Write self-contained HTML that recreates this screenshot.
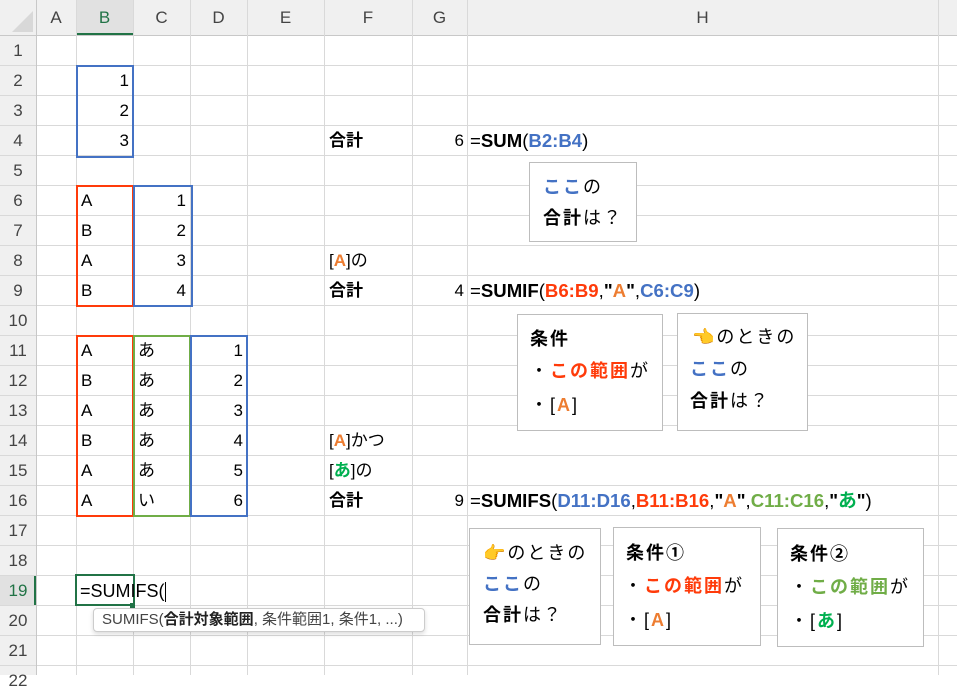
<!DOCTYPE html>
<html><head><meta charset="utf-8"><style>
*{margin:0;padding:0;box-sizing:border-box}
body{width:957px;height:675px;overflow:hidden;background:#fff;font-family:"Liberation Sans","Noto Sans CJK JP",sans-serif;font-size:17px;color:#000;position:relative}
.a{position:absolute}
.hl{position:absolute;left:0;width:957px;height:1px;background:#d9d9d9}
.vl{position:absolute;top:0;height:675px;width:1px;background:#d9d9d9}
.ch{position:absolute;top:0;height:35px;line-height:36px;text-align:center;color:#444;font-size:17px}
.rh{position:absolute;left:0;width:36px;height:30px;line-height:31px;text-align:center;color:#444;font-size:17px}
.c{position:absolute;height:30px;line-height:31px;white-space:nowrap}
.f{font-size:18.6px}
.r{text-align:right}
.b{font-weight:bold}
.bx{position:absolute;border:1.5px solid #bdbdbd;background:#fff;font-size:18px;letter-spacing:2px}
.bx div{position:absolute;white-space:nowrap}
.blue{color:#4472C4}.red{color:#FF3B0A}.org{color:#ED7D31}.grn{color:#70AD47}.g2{color:#00B050}
</style></head><body>
<div class="a" style="left:0;top:0;width:957px;height:35px;background:#f0f0f0"></div>
<div class="a" style="left:0;top:0;width:36px;height:675px;background:#f0f0f0"></div>
<div class="a" style="left:76px;top:0;width:57px;height:35px;background:#e1e1e1"></div>
<div class="a" style="left:76px;top:33px;width:57px;height:2px;background:#217346"></div>
<div class="a" style="left:0;top:575px;width:36px;height:30px;background:#e1e1e1"></div>
<div class="a" style="left:34px;top:575px;width:2px;height:30px;background:#217346"></div>
<div class="a" style="left:12px;top:11px;width:0;height:0;border-left:21px solid transparent;border-bottom:21px solid #d8d8d8"></div>
<div class="hl" style="top:35px;background:#c8c8c8"></div>
<div class="hl" style="top:65px"></div><div class="hl" style="top:95px"></div><div class="hl" style="top:125px"></div><div class="hl" style="top:155px"></div><div class="hl" style="top:185px"></div><div class="hl" style="top:215px"></div><div class="hl" style="top:245px"></div><div class="hl" style="top:275px"></div><div class="hl" style="top:305px"></div><div class="hl" style="top:335px"></div><div class="hl" style="top:365px"></div><div class="hl" style="top:395px"></div><div class="hl" style="top:425px"></div><div class="hl" style="top:455px"></div><div class="hl" style="top:485px"></div><div class="hl" style="top:515px"></div><div class="hl" style="top:545px"></div><div class="hl" style="top:575px"></div><div class="hl" style="top:605px"></div><div class="hl" style="top:635px"></div><div class="hl" style="top:665px"></div>
<div class="vl" style="left:36px;background:#c8c8c8"></div><div class="vl" style="left:76px"></div><div class="vl" style="left:133px"></div><div class="vl" style="left:190px"></div><div class="vl" style="left:247px"></div><div class="vl" style="left:324px"></div><div class="vl" style="left:412px"></div><div class="vl" style="left:467px"></div><div class="vl" style="left:938px"></div>
<div class="ch" style="left:36px;width:40px">A</div><div class="ch" style="left:76px;width:57px;color:#217346">B</div><div class="ch" style="left:133px;width:57px">C</div><div class="ch" style="left:190px;width:57px">D</div><div class="ch" style="left:247px;width:77px">E</div><div class="ch" style="left:324px;width:88px">F</div><div class="ch" style="left:412px;width:55px">G</div><div class="ch" style="left:467px;width:471px">H</div>
<div class="rh" style="top:35px">1</div><div class="rh" style="top:65px">2</div><div class="rh" style="top:95px">3</div><div class="rh" style="top:125px">4</div><div class="rh" style="top:155px">5</div><div class="rh" style="top:185px">6</div><div class="rh" style="top:215px">7</div><div class="rh" style="top:245px">8</div><div class="rh" style="top:275px">9</div><div class="rh" style="top:305px">10</div><div class="rh" style="top:335px">11</div><div class="rh" style="top:365px">12</div><div class="rh" style="top:395px">13</div><div class="rh" style="top:425px">14</div><div class="rh" style="top:455px">15</div><div class="rh" style="top:485px">16</div><div class="rh" style="top:515px">17</div><div class="rh" style="top:545px">18</div><div class="rh" style="top:575px;color:#217346">19</div><div class="rh" style="top:605px">20</div><div class="rh" style="top:635px">21</div><div class="rh" style="top:665px">22</div>
<div class="a" style="left:76px;top:65px;width:58px;height:93px;border:2px solid #4472C4"></div>
<div class="a" style="left:76px;top:185px;width:58px;height:122px;border:2px solid #FF3B0A"></div>
<div class="a" style="left:133px;top:185px;width:60px;height:122px;border:2px solid #4472C4"></div>
<div class="a" style="left:76px;top:335px;width:58px;height:182px;border:2px solid #FF3B0A"></div>
<div class="a" style="left:133px;top:335px;width:58px;height:182px;border:2px solid #70AD47"></div>
<div class="a" style="left:190px;top:335px;width:58px;height:182px;border:2px solid #4472C4"></div>
<div class="c r" style="left:76px;width:53px;top:65px">1</div><div class="c r" style="left:76px;width:53px;top:95px">2</div><div class="c r" style="left:76px;width:53px;top:125px">3</div>
<div class="c b" style="left:329px;top:125px">合計</div><div class="c r" style="left:412px;width:52px;top:125px">6</div>
<div class="c f" style="left:470px;top:125px">=<b>SUM</b>(<b class="blue">B2:B4</b>)</div>
<div class="c" style="left:81px;top:185px">A</div><div class="c" style="left:81px;top:215px">B</div><div class="c" style="left:81px;top:245px">A</div><div class="c" style="left:81px;top:275px">B</div>
<div class="c r" style="left:133px;width:53px;top:185px">1</div><div class="c r" style="left:133px;width:53px;top:215px">2</div><div class="c r" style="left:133px;width:53px;top:245px">3</div><div class="c r" style="left:133px;width:53px;top:275px">4</div>
<div class="c" style="left:329px;top:245px">[<b class="org">A</b>]の</div>
<div class="c b" style="left:329px;top:275px">合計</div><div class="c r" style="left:412px;width:52px;top:275px">4</div>
<div class="c f" style="left:470px;top:275px">=<b>SUMIF</b>(<b class="red">B6:B9</b>,<b>"</b><b class="org">A</b><b>"</b>,<b class="blue">C6:C9</b>)</div>
<div class="c" style="left:81px;top:335px">A</div><div class="c" style="left:81px;top:365px">B</div><div class="c" style="left:81px;top:395px">A</div><div class="c" style="left:81px;top:425px">B</div><div class="c" style="left:81px;top:455px">A</div><div class="c" style="left:81px;top:485px">A</div>
<div class="c" style="left:138px;top:335px">あ</div><div class="c" style="left:138px;top:365px">あ</div><div class="c" style="left:138px;top:395px">あ</div><div class="c" style="left:138px;top:425px">あ</div><div class="c" style="left:138px;top:455px">あ</div><div class="c" style="left:138px;top:485px">い</div>
<div class="c r" style="left:190px;width:53px;top:335px">1</div><div class="c r" style="left:190px;width:53px;top:365px">2</div><div class="c r" style="left:190px;width:53px;top:395px">3</div><div class="c r" style="left:190px;width:53px;top:425px">4</div><div class="c r" style="left:190px;width:53px;top:455px">5</div><div class="c r" style="left:190px;width:53px;top:485px">6</div>
<div class="c" style="left:329px;top:425px">[<b class="org">A</b>]かつ</div>
<div class="c" style="left:329px;top:455px">[<b class="g2">あ</b>]の</div>
<div class="c b" style="left:329px;top:485px">合計</div><div class="c r" style="left:412px;width:52px;top:485px">9</div>
<div class="c f" style="left:470px;top:485px">=<b>SUMIFS</b>(<b class="blue">D11:D16</b>,<b class="red">B11:B16</b>,<b>"</b><b class="org">A</b><b>"</b>,<b class="grn">C11:C16</b>,<b>"</b><b class="g2">あ</b><b>"</b>)</div>
<div class="a" style="left:75px;top:574px;width:60px;height:32px;border:2px solid #217346"></div>
<div class="a" style="left:130px;top:603px;width:5px;height:5px;background:#217346"></div>
<div class="c" style="left:80px;top:576px;font-size:18px">=SUMIFS(<span style="border-left:1px solid #000;height:20px;display:inline-block;vertical-align:middle"></span></div>
<div class="a" style="left:93px;top:608px;width:332px;height:24px;border:1px solid #ccc;border-radius:4px;background:#fff;box-shadow:0 2px 5px rgba(0,0,0,.15);font-size:15px;line-height:22px;color:#444;padding-left:8px;white-space:nowrap">SUMIFS(<b style="color:#222">合計対象範囲</b>, 条件範囲1, 条件1, ...)</div>
<div class="bx" style="left:529px;top:162px;width:108px;height:80px"><div style="left:13px;top:10px"><b class="blue">ここ</b>の</div><div style="left:13px;top:41px"><b>合計</b>は？</div></div>
<div class="bx" style="left:517px;top:314px;width:146px;height:117px"><div class="b" style="left:12px;top:10px">条件</div><div style="left:12px;top:42px">・<b class="red">この範囲</b>が</div><div style="left:12px;top:76px">・[<b class="org">A</b>]</div></div>
<div class="bx" style="left:677px;top:313px;width:131px;height:118px"><div style="left:14px;top:9px">👈のときの</div><div style="left:12px;top:41px"><b class="blue">ここ</b>の</div><div style="left:12px;top:73px"><b>合計</b>は？</div></div>
<div class="bx" style="left:469px;top:528px;width:132px;height:117px"><div style="left:13px;top:10px">👉のときの</div><div style="left:13px;top:41px"><b class="blue">ここ</b>の</div><div style="left:13px;top:72px"><b>合計</b>は？</div></div>
<div class="bx" style="left:613px;top:527px;width:148px;height:119px"><div class="b" style="left:12px;top:11px">条件①</div><div style="left:10px;top:44px">・<b class="red">この範囲</b>が</div><div style="left:10px;top:78px">・[<b class="org">A</b>]</div></div>
<div class="bx" style="left:777px;top:528px;width:147px;height:119px"><div class="b" style="left:12px;top:11px">条件②</div><div style="left:12px;top:44px">・<b class="grn">この範囲</b>が</div><div style="left:12px;top:78px">・[<b class="g2">あ</b>]</div></div>
</body></html>
